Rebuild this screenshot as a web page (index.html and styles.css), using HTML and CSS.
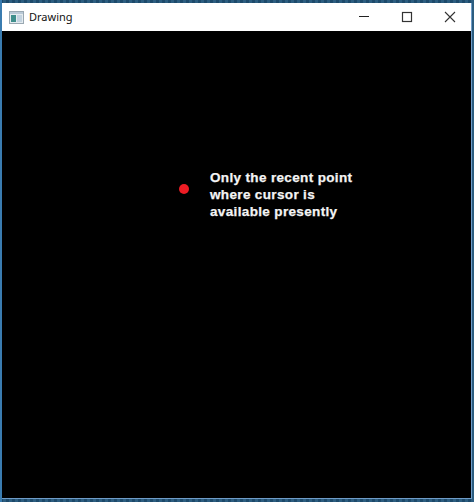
FILE: index.html
```html
<!DOCTYPE html>
<html lang="en">
<head>
    <meta charset="UTF-8">
    <title>Drawing</title>
    <link rel="stylesheet" href="styles.css">
</head>
<body>
    <div class="window">
        <div class="titlebar">
            <svg class="app-icon" width="15" height="13" viewBox="0 0 15 13">
                <rect x="0.5" y="0.5" width="14" height="12" fill="#e4ebef" stroke="#9aa8b2"/>
                <rect x="1" y="1" width="13" height="2" fill="#b9c9d6"/>
                <rect x="2" y="4" width="5" height="7" fill="#3f8f8c"/>
                <rect x="8" y="4" width="5" height="7" fill="#c3d3e0"/>
            </svg>
            <span class="title">Drawing</span>
            <div class="controls">
                <button class="control">
                    <svg width="12" height="12" viewBox="0 0 12 12"><path d="M1 5.5H11" stroke="#222" stroke-width="1"/></svg>
                </button>
                <button class="control">
                    <svg width="12" height="12" viewBox="0 0 12 12"><rect x="1.5" y="1.5" width="9" height="9" fill="none" stroke="#333" stroke-width="1.2"/></svg>
                </button>
                <button class="control">
                    <svg width="12" height="12" viewBox="0 0 12 12"><path d="M1 1L11 11M11 1L1 11" stroke="#333" stroke-width="1.1"/></svg>
                </button>
            </div>
        </div>
        <div class="canvas">
            <div class="point"></div>
            <div class="note">Only the recent point<br>where cursor is<br>available presently</div>
        </div>
    </div>
</body>
</html>
```

FILE: styles.css
```css
html, body {
    height: 100%;
}

body {
    margin: 0;
    box-sizing: border-box;
    padding: 3px 2px 3px 0;
    border-left: 2px solid #3a7cb0;
    background: repeating-linear-gradient(90deg, #1d4a6b 0, #1d4a6b 3px, #2c5d80 3px, #2c5d80 6px);
    font-family: 'Liberation Sans', Arial, sans-serif;
    overflow: hidden;
}

.window {
    display: flex;
    flex-direction: column;
    height: 100%;
    box-sizing: border-box;
    border-bottom: 1px solid #6f9cc8;
    border-right: 1px solid #6f9cc8;
}

.titlebar {
    display: flex;
    align-items: center;
    height: 28px;
    flex-shrink: 0;
    background: #ffffff;
    padding-left: 7px;
}

.app-icon {
    margin-right: 5px;
}

.title {
    font-family: 'Noto Sans', sans-serif;
    font-size: 11px;
    line-height: 13px;
    padding-bottom: 2px;
    color: #111111;
}

.controls {
    display: flex;
    margin-left: auto;
}

.control {
    display: flex;
    align-items: center;
    justify-content: center;
    width: 43px;
    height: 28px;
    padding: 0;
    border: none;
    background: none;
}

.canvas {
    position: relative;
    flex: 1;
    background: #000000;
}

.point {
    position: absolute;
    left: 177px;
    top: 153px;
    width: 10px;
    height: 10px;
    border-radius: 50%;
    background: #ed1c24;
}

.note {
    position: absolute;
    left: 208px;
    top: 138px;
    font-size: 13.5px;
    font-weight: bold;
    line-height: 17px;
    letter-spacing: 0.35px;
    color: #f4f4f4;
    -webkit-text-stroke: 0.25px #f4f4f4;
}
```
